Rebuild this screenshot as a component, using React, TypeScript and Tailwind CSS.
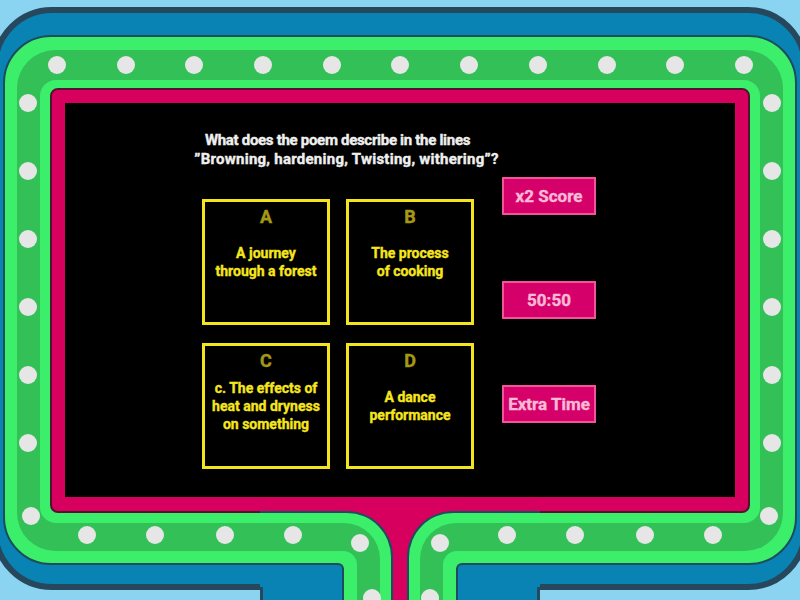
import React from "react";

const dots: [number, number][] = [
  [57, 65], [126, 65], [194, 65], [263, 65], [332, 65], [400, 65], [469, 65], [538, 65], [607, 65], [675, 65], [744, 65],
  [28, 103], [28, 171], [28, 239], [28, 307], [28, 375], [28, 443], [31, 516],
  [772, 103], [772, 171], [772, 239], [772, 307], [772, 375], [772, 443], [769, 516],
  [87, 535], [155, 535], [225, 535], [293, 535], [360, 543],
  [440, 543], [507, 535], [575, 535], [645, 535], [713, 535],
  [372, 598], [430, 598],
];

const answers = [
  { letter: "A", lines: ["A journey", "through a forest"] },
  { letter: "B", lines: ["The process", "of cooking"] },
  { letter: "C", lines: ["c. The effects of", "heat and dryness", "on something"] },
  { letter: "D", lines: ["A dance", "performance"] },
];

const powerUps = ["x2 Score", "50:50", "Extra Time"];

export default function App() {
  return (
    <div className="relative w-[800px] h-[600px] overflow-hidden bg-[#8ad3f1] font-['Roboto',sans-serif]">
      {/* outer blue frame */}
      <div className="mx-[-8px] mt-[7px] h-[583px] rounded-[60px] border-[6px] border-[#27485c] bg-[#0983b3] pt-[22px] px-[5px]">
        {/* green ring */}
        <div className="h-[530px] rounded-[48px] border-2 border-[#1c4c5e] bg-[#3cef6b] pt-[13px] pb-[12px] px-[12px]">
          <div className="h-full rounded-[38px] bg-[#33c157] pt-[30px] pb-[28px] px-[23px]">
            <div className="h-full rounded-[16px] bg-[#3cef6b] pt-[8px] pb-[10px] px-[10px]">
              <div className="h-full rounded-[8px] border-2 border-[#55122f] bg-[#d8005f] pt-[13px] pb-[14px] px-[13px]">
                <div className="h-full bg-black flex">
                  <div className="w-[437px] flex flex-col">
                    <div className="ml-[128px] w-[307px] mt-[28px] text-center text-[15px] leading-[19px] font-bold text-[#efefef] whitespace-nowrap [-webkit-text-stroke:0.4px_#efefef]">
                      <div className="pr-[18px] tracking-[-0.3px]">What does the poem describe in the lines</div>
                      <div className="tracking-[0.25px]">”Browning, hardening, Twisting, withering”?</div>
                    </div>
                    <div className="mt-[30px] ml-[137px] grid grid-cols-[128px_128px] gap-x-[16px] gap-y-[18px]">
                      {answers.map((a) => (
                        <div key={a.letter} className="h-[126px] border-[3px] border-[#f4e41c] flex flex-col">
                          <div className="h-[30px] leading-[30px] text-center text-[18px] font-bold text-[#a59914] [-webkit-text-stroke:0.4px_#a59914]">{a.letter}</div>
                          <div className="flex-1 flex flex-col items-center justify-center text-[14px] leading-[18px] font-bold text-[#f6e61e] [-webkit-text-stroke:0.35px_#f6e61e]">
                            {a.lines.map((l) => (
                              <div key={l}>{l}</div>
                            ))}
                          </div>
                          <div className="h-[30px]" />
                        </div>
                      ))}
                    </div>
                  </div>
                  <div className="pt-[74px] flex flex-col gap-[66px]">
                    {powerUps.map((p) => (
                      <div key={p} className="h-[38px] w-[94px] border-2 border-[#f0559a] bg-[#d6006a] text-[#f8bad5] text-[17px] font-bold [-webkit-text-stroke:0.4px_#f8bad5] flex items-center justify-center pt-[2px]">
                        {p}
                      </div>
                    ))}
                  </div>
                </div>
              </div>
            </div>
          </div>
        </div>
      </div>

      {/* pink stem */}
      <div className="absolute left-[340px] top-[500px] w-[120px] h-[100px] bg-[#d8005f]" />

      {/* left lower piece */}
      <div className="absolute left-[260px] top-[511px] w-[133px] h-[95px] rounded-tr-[46px] border-t-2 border-r-2 border-[#1c4c5e] bg-[#3cef6b] pt-[10px] pr-[11px]">
        <div className="h-full rounded-tr-[36px] bg-[#33c157] pt-[28px] pr-[23px]">
          <div className="h-full rounded-tr-[14px] bg-[#3cef6b] pt-[12px] pr-[13px]">
            <div className="h-full rounded-tr-[6px] border-t-2 border-r-2 border-[#1c4c5e] bg-[#0983b3] flex flex-col">
              <div className="h-[22px]" />
              <div className="flex-1 border-l-[3px] border-[#27485c]" />
            </div>
          </div>
        </div>
      </div>

      {/* right lower piece */}
      <div className="absolute left-[407px] top-[511px] w-[133px] h-[95px] rounded-tl-[46px] border-t-2 border-l-2 border-[#1c4c5e] bg-[#3cef6b] pt-[10px] pl-[11px]">
        <div className="h-full rounded-tl-[36px] bg-[#33c157] pt-[28px] pl-[23px]">
          <div className="h-full rounded-tl-[14px] bg-[#3cef6b] pt-[12px] pl-[13px]">
            <div className="h-full rounded-tl-[6px] border-t-2 border-l-2 border-[#1c4c5e] bg-[#0983b3] flex flex-col">
              <div className="h-[22px]" />
              <div className="flex-1 border-r-[3px] border-[#27485c]" />
            </div>
          </div>
        </div>
      </div>

      {/* light bulbs */}
      {dots.map(([x, y], i) => (
        <div
          key={i}
          className="absolute w-[18px] h-[18px] rounded-full bg-[#e6e6e6]"
          style={{ left: x - 9, top: y - 9 }}
        />
      ))}
    </div>
  );
}
